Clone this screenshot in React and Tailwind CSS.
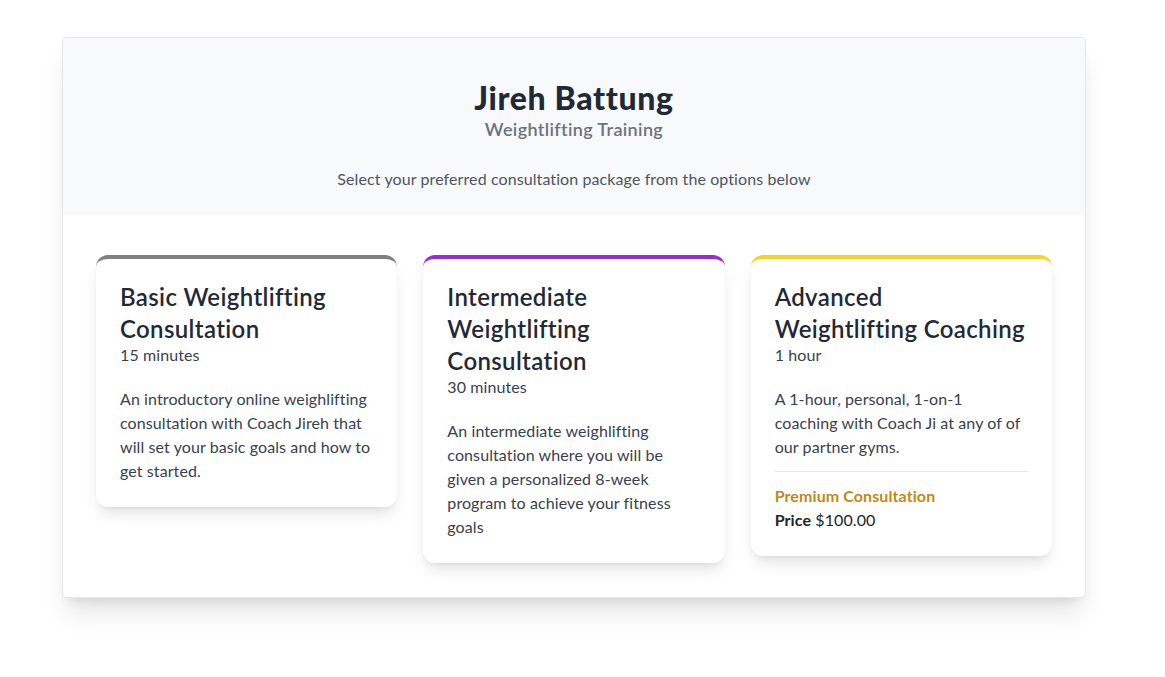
export default function App() {
  const font = { fontFamily: '"Segoe UI", Lato, sans-serif' };
  return (
    <div className="min-h-screen bg-white text-[#212529]" style={font}>
      <div className="pt-[37px] pb-20">
        <div className="ml-[62px] w-[1024px] border border-[#e5e7eb] rounded shadow-xl bg-white overflow-hidden">
          {/* ===== Header ===== */}
          <div className="bg-[#f8f9fa] text-center pt-[42px] pb-[24px]">
            <h1 className="text-[32px] leading-[35px] font-black tracking-[0.02em] text-[#1f2937]">Jireh Battung</h1>
            <p className="text-lg leading-7 font-semibold tracking-[0.02em] text-[#6b7280]">Weightlifting Training</p>
            <p className="mt-6 text-base leading-6 tracking-[0.006em] text-[#4b5563]">
              Select your preferred consultation package from the options below
            </p>
          </div>

          {/* ===== Packages ===== */}
          <div className="grid grid-cols-3 gap-[26px] px-[33px] pt-10 pb-[34px] items-start">
            <Card
              color="border-t-[#808080]"
              title="Basic Weightlifting Consultation"
              duration="15 minutes"
              desc="An introductory online weighlifting consultation with Coach Jireh that will set your basic goals and how to get started."
            />
            <Card
              color="border-t-[#9b2bd6]"
              title="Intermediate Weightlifting Consultation"
              duration="30 minutes"
              desc="An intermediate weighlifting consultation where you will be given a personalized 8-week program to achieve your fitness goals"
            />
            <Card
              color="border-t-[#f5d327]"
              title="Advanced Weightlifting Coaching"
              duration="1 hour"
              desc="A 1-hour, personal, 1-on-1 coaching with Coach Ji at any of of our partner gyms."
              premium
            />
          </div>
        </div>
      </div>
    </div>
  );
}

function Card({ color, title, duration, desc, premium }) {
  return (
    <div className={`bg-white rounded-xl border-t-4 ${color} shadow-lg px-6 pt-[22px] pb-6`}>
      <h3 className="text-2xl leading-8 font-semibold tracking-[0.015em] text-[#1f2937]">{title}</h3>
      <p className="text-base leading-5 tracking-[0.006em] text-[#374151]">{duration}</p>
      <p className="mt-[22px] text-base leading-6 tracking-[0.006em] text-[#374151]">{desc}</p>
      {premium && (
        <div className="mt-3 pt-3 border-t border-[#e5e7eb]">
          <p className="font-bold text-[#c08a16] leading-6 tracking-[0.006em]">Premium Consultation</p>
          <p className="leading-6 tracking-[0.006em]">
            <span className="font-bold">Price</span> $100.00
          </p>
        </div>
      )}
    </div>
  );
}
